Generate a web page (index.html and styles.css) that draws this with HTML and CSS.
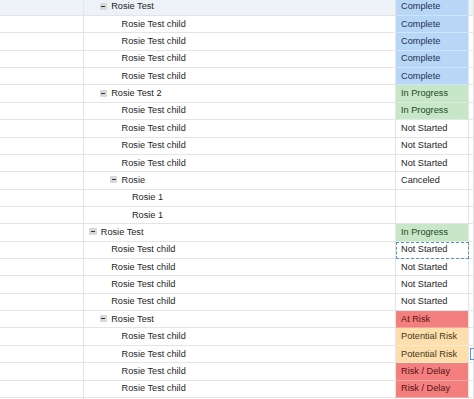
FILE: index.html
```html
<!DOCTYPE html>
<html>
<head>
<meta charset="utf-8">
<link rel="stylesheet" href="styles.css">
</head>
<body>
<div class="grid">
  <div class="row hl"><div class="c1"></div><div class="c2 l1"><span class="tg"></span><span>Rosie Test</span></div><div class="st blue">Complete</div><div class="c4"></div></div>
  <div class="row"><div class="c1"></div><div class="c2 l2"><span class="sp"></span><span>Rosie Test child</span></div><div class="st blue">Complete</div><div class="c4"></div></div>
  <div class="row"><div class="c1"></div><div class="c2 l2"><span class="sp"></span><span>Rosie Test child</span></div><div class="st blue">Complete</div><div class="c4"></div></div>
  <div class="row"><div class="c1"></div><div class="c2 l2"><span class="sp"></span><span>Rosie Test child</span></div><div class="st blue">Complete</div><div class="c4"></div></div>
  <div class="row"><div class="c1"></div><div class="c2 l2"><span class="sp"></span><span>Rosie Test child</span></div><div class="st blue">Complete</div><div class="c4"></div></div>
  <div class="row"><div class="c1"></div><div class="c2 l1"><span class="tg"></span><span>Rosie Test 2</span></div><div class="st green">In Progress</div><div class="c4"></div></div>
  <div class="row"><div class="c1"></div><div class="c2 l2"><span class="sp"></span><span>Rosie Test child</span></div><div class="st green">In Progress</div><div class="c4"></div></div>
  <div class="row"><div class="c1"></div><div class="c2 l2"><span class="sp"></span><span>Rosie Test child</span></div><div class="st">Not Started</div><div class="c4"></div></div>
  <div class="row"><div class="c1"></div><div class="c2 l2"><span class="sp"></span><span>Rosie Test child</span></div><div class="st">Not Started</div><div class="c4"></div></div>
  <div class="row"><div class="c1"></div><div class="c2 l2"><span class="sp"></span><span>Rosie Test child</span></div><div class="st">Not Started</div><div class="c4"></div></div>
  <div class="row"><div class="c1"></div><div class="c2 l2"><span class="tg"></span><span>Rosie</span></div><div class="st">Canceled</div><div class="c4"></div></div>
  <div class="row"><div class="c1"></div><div class="c2 l3"><span class="sp"></span><span>Rosie 1</span></div><div class="st"></div><div class="c4"></div></div>
  <div class="row"><div class="c1"></div><div class="c2 l3"><span class="sp"></span><span>Rosie 1</span></div><div class="st"></div><div class="c4"></div></div>
  <div class="row"><div class="c1"></div><div class="c2 l0"><span class="tg"></span><span>Rosie Test</span></div><div class="st green">In Progress</div><div class="c4"></div></div>
  <div class="row"><div class="c1"></div><div class="c2 l1"><span class="sp"></span><span>Rosie Test child</span></div><div class="st dashed">Not Started</div><div class="c4"></div></div>
  <div class="row"><div class="c1"></div><div class="c2 l1"><span class="sp"></span><span>Rosie Test child</span></div><div class="st">Not Started</div><div class="c4"></div></div>
  <div class="row"><div class="c1"></div><div class="c2 l1"><span class="sp"></span><span>Rosie Test child</span></div><div class="st">Not Started</div><div class="c4"></div></div>
  <div class="row"><div class="c1"></div><div class="c2 l1"><span class="sp"></span><span>Rosie Test child</span></div><div class="st">Not Started</div><div class="c4"></div></div>
  <div class="row"><div class="c1"></div><div class="c2 l1"><span class="tg"></span><span>Rosie Test</span></div><div class="st red">At Risk</div><div class="c4"></div></div>
  <div class="row"><div class="c1"></div><div class="c2 l2"><span class="sp"></span><span>Rosie Test child</span></div><div class="st orange">Potential Risk</div><div class="c4"></div></div>
  <div class="row"><div class="c1"></div><div class="c2 l2"><span class="sp"></span><span>Rosie Test child</span></div><div class="st orange">Potential Risk</div><div class="c4 sel"></div></div>
  <div class="row"><div class="c1"></div><div class="c2 l2"><span class="sp"></span><span>Rosie Test child</span></div><div class="st red">Risk / Delay</div><div class="c4"></div></div>
  <div class="row"><div class="c1"></div><div class="c2 l2"><span class="sp"></span><span>Rosie Test child</span></div><div class="st red">Risk / Delay</div><div class="c4"></div></div>
  <div class="row"><div class="c1"></div><div class="c2"></div><div class="st"></div><div class="c4"></div></div>
</div>
</body>
</html>
```

FILE: styles.css
```css
html, body {
  margin: 0;
  padding: 0;
  background: #ffffff;
  overflow: hidden;
}
body {
  font-family: "Liberation Sans", Arial, sans-serif;
  font-size: 9.2px;
  color: #1e1e1e;
}
.grid {
  display: flex;
  flex-direction: column;
  margin-top: -1.36px;
}
.row {
  display: flex;
  height: 17.36px;
  flex: none;
}
.row > div {
  box-sizing: border-box;
  border-bottom: 1px solid #e4e4e4;
  border-right: 1px solid #e4e4e4;
  height: 100%;
  display: flex;
  align-items: center;
  white-space: nowrap;
  position: relative;
}
.c1 { width: 84px; flex: none; }
.c2 { width: 312px; flex: none; }
.st {
  width: 73px;
  flex: none;
  padding-left: 5px;
  padding-bottom: 1px;
}
.c4 { flex: 1; }
.hl .c1, .hl .c2, .hl .c4 { background: #edf2f9; }
.c2 { padding-bottom: 1px; }
.l0 { padding-left: 5.3px; }
.l1 { padding-left: 15.7px; }
.l2 { padding-left: 26.1px; }
.l3 { padding-left: 36.5px; }
.tg, .sp {
  width: 7.3px;
  height: 7px;
  margin-right: 4.2px;
  flex: none;
  position: relative;
}
.tg {
  background: #d8d8d8;
  border-radius: 1px;
}
.tg::before {
  content: "";
  position: absolute;
  left: 1.8px;
  top: 3px;
  width: 3.8px;
  height: 1px;
  background: #333;
}
.blue { background: #b8d7f7; color: #1c3252; border-bottom-color: #cfe3fa !important; }
.green { background: #c8e6c8; color: #234d23; border-bottom-color: #daeeda !important; }
.red { background: #f37f7f; color: #561212; border-bottom-color: #f6a3a3 !important; }
.orange { background: #fddfae; color: #45361a; border-bottom-color: #fde9c8 !important; }
.dashed {
  outline: 1.5px dashed #5a8ed6;
  outline-offset: -1.5px;
}
.sel::before {
  content: "";
  position: absolute;
  left: 1px;
  top: 2px;
  bottom: 2px;
  width: 12px;
  border: 1px solid #5a8fd6;
  border-right: none;
}
```
